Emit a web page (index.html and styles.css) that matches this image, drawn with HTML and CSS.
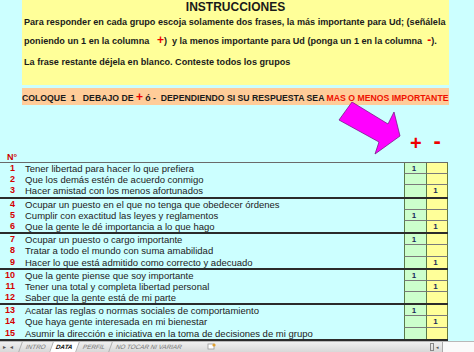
FILE: index.html
```
<!DOCTYPE html>
<html lang="es">
<head>
<meta charset="utf-8">
<link rel="stylesheet" href="styles.css">
</head>
<body>
<div class="sheet">
  <div class="instr">
    <div class="title">INSTRUCCIONES</div>
    <p class="line l1">Para responder en cada grupo escoja solamente dos frases, la más importante para Ud; (señálela</p>
    <p class="line l2">poniendo un 1 en la columna &nbsp;&nbsp;<span class="sign">+</span>) &nbsp;y la menos importante para Ud (ponga un 1 en la columna &nbsp;<span class="sign">-</span>).</p>
    <p class="line l3">La frase restante déjela en blanco. Conteste todos los grupos</p>
  </div>
  <div class="bar"><span class="bt">COLOQUE  1   DEBAJO DE <span class="sign">+</span> ó -  DEPENDIENDO SI SU RESPUESTA SEA <span class="red">MAS O MENOS IMPORTANTE</span></span></div>
  <div class="marks">
    <svg class="arrow" width="70" height="60" viewBox="0 0 70 60">
      <polygon points="16,0 52,22 58,10 64,34 39,52 43,40 3,18" fill="#ff00ff" stroke="#7a1a8a" stroke-width="0.8"/>
    </svg>
    <div class="pm"><span class="plus">+</span><span class="minus">-</span></div>
  </div>
  <div class="nhead">N°</div>
  <div class="table">
    <div class="group">
      <div class="row"><span class="num">1</span><span class="txt">Tener libertad para hacer lo que prefiera</span><span class="c p">1</span><span class="c m"></span></div>
      <div class="row"><span class="num">2</span><span class="txt">Que los demás estén de acuerdo conmigo</span><span class="c p"></span><span class="c m"></span></div>
      <div class="row"><span class="num">3</span><span class="txt">Hacer amistad con los menos afortunados</span><span class="c p"></span><span class="c m">1</span></div>
    </div>
    <div class="group">
      <div class="row"><span class="num">4</span><span class="txt">Ocupar un puesto en el que no tenga que obedecer órdenes</span><span class="c p"></span><span class="c m"></span></div>
      <div class="row"><span class="num">5</span><span class="txt">Cumplir con exactitud las leyes y reglamentos</span><span class="c p">1</span><span class="c m"></span></div>
      <div class="row"><span class="num">6</span><span class="txt">Que la gente le dé importancia a lo que hago</span><span class="c p"></span><span class="c m">1</span></div>
    </div>
    <div class="group">
      <div class="row"><span class="num">7</span><span class="txt">Ocupar un puesto o cargo importante</span><span class="c p">1</span><span class="c m"></span></div>
      <div class="row"><span class="num">8</span><span class="txt">Tratar a todo el mundo con suma amabilidad</span><span class="c p"></span><span class="c m"></span></div>
      <div class="row"><span class="num">9</span><span class="txt">Hacer lo que está admitido como correcto y adecuado</span><span class="c p"></span><span class="c m">1</span></div>
    </div>
    <div class="group">
      <div class="row"><span class="num">10</span><span class="txt">Que la gente piense que soy importante</span><span class="c p">1</span><span class="c m"></span></div>
      <div class="row"><span class="num">11</span><span class="txt">Tener una total y completa libertad personal</span><span class="c p"></span><span class="c m">1</span></div>
      <div class="row"><span class="num">12</span><span class="txt">Saber que la gente está de mi parte</span><span class="c p"></span><span class="c m"></span></div>
    </div>
    <div class="group">
      <div class="row"><span class="num">13</span><span class="txt">Acatar las reglas o normas sociales de comportamiento</span><span class="c p">1</span><span class="c m"></span></div>
      <div class="row"><span class="num">14</span><span class="txt">Que haya gente interesada en mi bienestar</span><span class="c p"></span><span class="c m">1</span></div>
      <div class="row"><span class="num">15</span><span class="txt">Asumir la dirección e iniciativa en la toma de decisiones de mi grupo</span><span class="c p"></span><span class="c m"></span></div>
    </div>
  </div>
</div>
<div class="tabs">
  <span class="nav">&#9656; &#9666;</span>
  <span class="tab">INTRO</span>
  <span class="tab active">DATA</span>
  <span class="tab">PERFIL</span>
  <span class="tab">NO TOCAR NI VARIAR</span>
  <span class="newtab"><svg width="9" height="7" viewBox="0 0 9 7"><rect x="1" y="1" width="6" height="5" fill="#fff" stroke="#999" stroke-width="0.8"/><circle cx="7" cy="2" r="1.6" fill="#e0a030"/></svg></span>
  <span class="spacer"></span>
  <span class="hs"><span class="grip"></span>&#9666;</span>
  <span class="scroll"></span>
</div>
</body>
</html>
```
FILE: styles.css
```
html, body {
  margin: 0;
  padding: 0;
}
body {
  width: 474px;
  height: 352px;
  overflow: hidden;
  background: #ccffff;
  font-family: "Liberation Sans", Arial, sans-serif;
  color: #1a1a1a;
}
.sheet {
  height: 341px;
  overflow: hidden;
}
.instr {
  margin-left: 22px;
  width: 427px;
  height: 85px;
  background: #ffff99;
  box-sizing: border-box;
  padding-left: 2px;
}
.title {
  font-weight: bold;
  font-size: 12px;
  line-height: 14px;
  text-align: center;
  padding-right: 2px;
}
.line {
  margin: 0;
  font-weight: bold;
  font-size: 9.1px;
  line-height: 12px;
  white-space: nowrap;
}
.l1 { margin-top: 2px; }
.l2 { margin-top: 7px; }
.l3 { margin-top: 9px; }
.sign {
  color: #ee0000;
  font-size: 12px;
  line-height: 10px;
}
.red { color: #ee1100; }
.bar {
  margin-top: 3px;
  margin-left: 22px;
  width: 427px;
  height: 17px;
  background: #ffcc99;
  box-sizing: border-box;
  padding-top: 3px;
  font-weight: bold;
  font-size: 8.7px;
  line-height: 14px;
  white-space: pre;
}
.marks {
  position: relative;
  height: 46px;
}
.arrow {
  position: absolute;
  left: 336px;
  top: -3px;
}
.pm {
  display: flex;
  margin-left: 404px;
  width: 44px;
  padding-top: 28px;
  color: #ee0000;
  font-weight: bold;
  font-size: 20px;
  line-height: 20px;
}
.pm span {
  width: 22px;
  text-align: center;
}
.plus { padding-left: 1px; }
.minus { font-size: 22px; transform: translateY(-2px); }
.nhead {
  height: 11px;
  line-height: 12px;
  font-size: 9px;
  font-weight: bold;
  color: #cc0000;
  padding-left: 7px;
}
.table {
  width: 448px;
  border-top: 1px solid #6a6a6a;
}
.group {
  border-bottom: 2px solid #2b2b2b;
}
.row {
  display: flex;
  height: 11.2px;
  font-size: 9.5px;
  line-height: 11.2px;
}
.num {
  width: 15px;
  text-align: right;
  color: #d40000;
  font-weight: bold;
  font-size: 9px;
  flex-shrink: 0;
}
.txt {
  flex: 1;
  padding-left: 10px;
  color: #222;
  white-space: nowrap;
  overflow: hidden;
}
.c {
  width: 22px;
  flex-shrink: 0;
  box-sizing: border-box;
  border-left: 1px solid #5a7a4a;
  text-align: center;
  font-weight: bold;
  font-size: 8px;
  color: #1a2a5a;
  padding-right: 3px;
}
.c.p { background: #ccffcc; }
.c.m {
  background: #ffff99;
  border-right: 1px solid #6a7a3a;
}
.row:not(:last-child) .c {
  border-bottom: 1px solid #7a7a7a;
}
.tabs {
  height: 11px;
  display: flex;
  align-items: stretch;
  background: linear-gradient(#f0f0f0, #d8d8d8);
  border-top: 1px solid #b8b8b8;
  box-sizing: border-box;
  font-size: 6.3px;
  line-height: 10px;
  color: #777;
}
.nav {
  width: 20px;
  padding-left: 3px;
  box-sizing: border-box;
  font-size: 6px;
  color: #555;
  letter-spacing: 1px;
}
.tab {
  display: inline-block;
  padding: 0 5px;
  border-left: 1px solid #b0b0b0;
  transform: skewX(-20deg);
}
.tab.active {
  background: #fff;
  color: #111;
  font-weight: bold;
  padding: 0 5px 0 4px;
}
.newtab {
  padding-left: 20px;
  padding-top: 1px;
}
.spacer { flex: 1; }
.hs {
  width: 12px;
  display: flex;
  align-items: center;
  gap: 2px;
  color: #555;
  font-size: 5px;
}
.grip {
  width: 2px;
  height: 6px;
  border: 1px solid #888;
}
.scroll {
  width: 31px;
  background: #fafafa;
  border-left: 1px solid #aaa;
}
```
